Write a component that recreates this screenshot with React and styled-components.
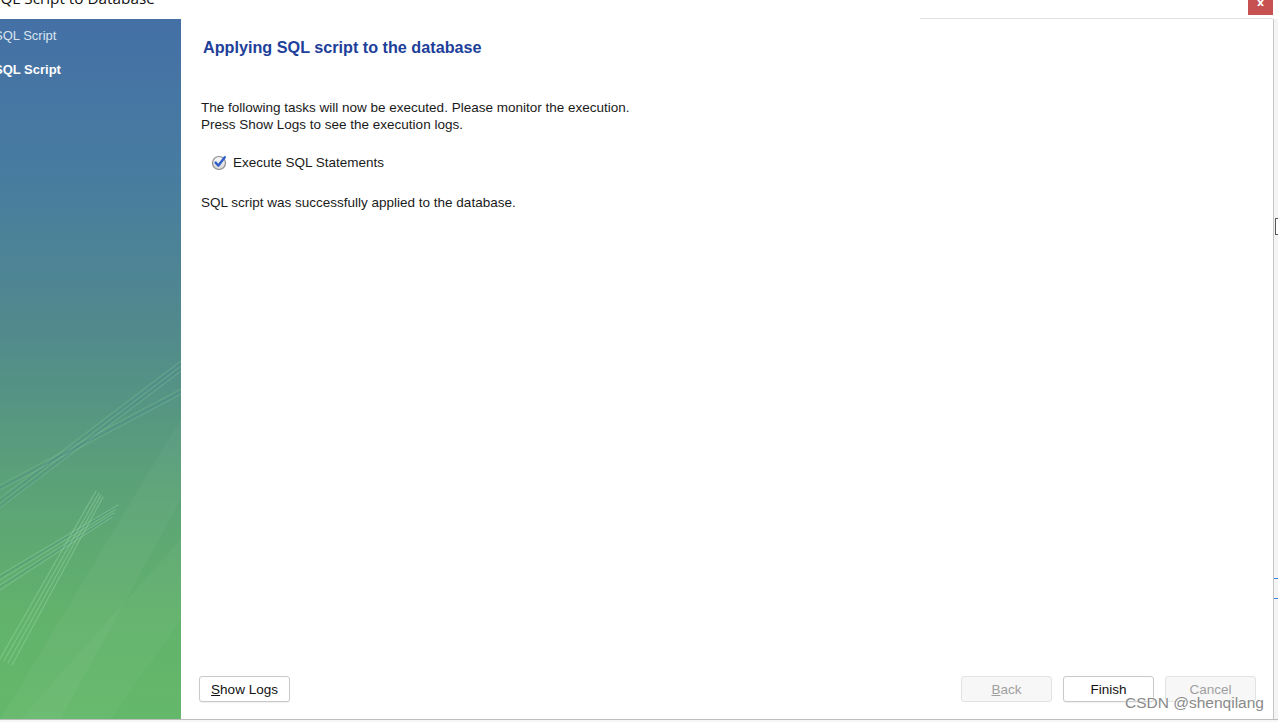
import React from 'react';
import styled, { createGlobalStyle } from 'styled-components';

const GlobalStyle = createGlobalStyle`
  html, body {
    margin: 0;
    padding: 0;
    background: #ffffff;
  }
  body {
    font-family: "Liberation Sans", Arial, sans-serif;
  }
`;

const Screen = styled.div`
  width: 1278px;
  height: 722px;
  overflow: hidden;
  display: flex;
  flex-direction: column;
  background: #ffffff;
`;

const TitleBar = styled.div`
  position: relative;
  height: 19px;
  flex: none;
  overflow: hidden;
  &::after {
    content: '';
    position: absolute;
    left: 920px;
    right: 5px;
    bottom: 0;
    height: 1px;
    background: #e1e1e1;
  }
`;

const TitleText = styled.div`
  margin: -12px 0 0 -8px;
  font-family: "Open Sans", "Liberation Sans", sans-serif;
  font-size: 15.3px;
  color: #111111;
  white-space: nowrap;
`;

const CloseButton = styled.div`
  position: absolute;
  top: 0;
  right: 5px;
  width: 25px;
  height: 15px;
  background: #c75050;
  color: #ffffff;
  font-family: "DejaVu Sans", sans-serif;
  font-size: 11px;
  font-weight: bold;
  line-height: 6px;
  text-align: center;
`;

const Body = styled.div`
  flex: 1;
  display: flex;
  min-height: 0;
`;

const Sidebar = styled.div`
  position: relative;
  width: 181px;
  flex: none;
  padding-top: 0;
  box-sizing: border-box;
  background: linear-gradient(
    180deg,
    #4470a6 0%,
    #487ca0 22%,
    #528a8c 45%,
    #5aa079 65%,
    #62b26c 85%,
    #64b86a 100%
  );
  overflow: hidden;
`;

const Streaks = styled.svg`
  position: absolute;
  left: 0;
  top: 0;
  width: 181px;
  height: 701px;
  pointer-events: none;
`;

const SideItem = styled.div`
  position: relative;
  text-indent: -6px;
  height: 34px;
  line-height: 34px;
  font-size: 13px;
  font-weight: ${(p) => (p.$active ? 'bold' : 'normal')};
  color: ${(p) => (p.$active ? '#ffffff' : '#d9e3ee')};
  white-space: nowrap;
`;

const Content = styled.div`
  flex: 1;
  display: flex;
  flex-direction: column;
  padding: 19px 17px 17px 20px;
  min-width: 0;
  font-size: 13.5px;
  color: #1a1a1a;
`;

const Heading = styled.h1`
  margin: 0 0 0 2px;
  font-size: 16.2px;
  font-weight: bold;
  color: #1d3f9a;
  line-height: 19px;
`;

const Paragraph = styled.p`
  margin: ${(p) => p.$top}px 0 0 0;
  line-height: 17px;
`;

const TaskRow = styled.div`
  display: flex;
  align-items: center;
  gap: 5px;
  margin: 21px 0 0 10px;
  line-height: 17px;
`;

const Footer = styled.div`
  margin-top: auto;
  display: flex;
  align-items: center;
`;

const Spacer = styled.div`
  flex: 1;
`;

const Button = styled.button`
  width: 91px;
  height: 26px;
  box-sizing: border-box;
  border: 1px solid ${(p) => (p.disabled ? '#e3e3e3' : '#c9c9c9')};
  border-radius: 3px;
  background: ${(p) => (p.disabled ? '#f7f7f7' : '#ffffff')};
  color: ${(p) => (p.disabled ? '#a0a0a0' : '#111111')};
  font-family: "Liberation Sans", Arial, sans-serif;
  font-size: 13.5px;
  padding: 0;
  margin-left: ${(p) => p.$gap || 0}px;
  box-shadow: ${(p) => (p.disabled ? 'none' : '0 1px 1px rgba(0,0,0,0.06)')};
  u {
    text-decoration: underline;
  }
`;

const RightEdge = styled.div`
  position: relative;
  width: 5px;
  flex: none;
  border-left: 1px solid #c6c6c6;
  background: #f4f4f4;
  box-sizing: border-box;
`;

const EdgeBox = styled.div`
  position: absolute;
  left: 1px;
  top: 199px;
  width: 6px;
  height: 15px;
  border: 1px solid #555555;
  background: #ffffff;
`;

const EdgeLine = styled.div`
  position: absolute;
  left: 0;
  right: 0;
  top: ${(p) => p.$top}px;
  height: 1px;
  background: #3b86d8;
`;

const BottomEdge = styled.div`
  height: 3px;
  flex: none;
  border-top: 1px solid #bdbdbd;
  background: #f6f6f6;
  box-sizing: border-box;
`;

const Watermark = styled.div`
  position: absolute;
  left: 1125px;
  top: 694px;
  font-family: "Liberation Sans", Arial, sans-serif;
  font-size: 15.5px;
  color: #8a8a8a;
  text-shadow: 0 0 2px #ffffff, 0 0 2px #ffffff;
  white-space: nowrap;
  pointer-events: none;
`;

const Frame = styled.div`
  position: relative;
`;

const CheckIcon = () => (
  <svg width="17" height="17" viewBox="0 0 17 17">
    <defs>
      <linearGradient id="cb" x1="0" y1="0" x2="0" y2="1">
        <stop offset="0" stopColor="#fbfbfb" />
        <stop offset="1" stopColor="#d6d6d6" />
      </linearGradient>
    </defs>
    <circle cx="8" cy="9" r="6.5" fill="url(#cb)" stroke="#8c8c8c" strokeWidth="1.2" />
    <path
      d="M4.6 8.6 L7.4 11.6 L13.8 3.2"
      fill="none"
      stroke="#2f5fc7"
      strokeWidth="2.4"
      strokeLinecap="round"
      strokeLinejoin="round"
    />
  </svg>
);

const SidebarArt = () => (
  <Streaks viewBox="0 0 181 701">
    <g fill="none" strokeLinecap="round">
      <polygon points="0,701 181,400 181,480 60,701" fill="rgba(255,255,255,0.035)" />
      <polygon points="20,701 181,520 181,600 110,701" fill="rgba(255,255,255,0.03)" />
      <g stroke="rgba(120,190,150,0.4)" strokeWidth="1.2">
        <path d="M0 479 L181 342" />
        <path d="M0 484 L181 347" />
        <path d="M0 489 L181 352" />
        <path d="M0 466 L181 370" />
        <path d="M0 471 L181 375" />
      </g>
      <g stroke="rgba(70,130,150,0.45)" strokeWidth="1">
        <path d="M0 482 L181 345" />
        <path d="M0 487 L181 350" />
        <path d="M0 469 L181 373" />
      </g>
      <g stroke="rgba(140,205,160,0.45)" strokeWidth="1.2">
        <path d="M0 556 L118 486" />
        <path d="M0 561 L116 490" />
        <path d="M0 566 L114 494" />
        <path d="M0 571 L112 498" />
      </g>
      <g stroke="rgba(70,140,140,0.4)" strokeWidth="1">
        <path d="M0 558 L117 488" />
        <path d="M0 568 L113 496" />
      </g>
      <g stroke="rgba(150,215,165,0.45)" strokeWidth="1.2">
        <path d="M0 640 L96 472" />
        <path d="M4 642 L99 474" />
        <path d="M8 644 L101 476" />
        <path d="M12 646 L103 478" />
      </g>
    </g>
  </Streaks>
);

export default function App() {
  return (
    <>
      <GlobalStyle />
      <Frame>
        <Screen>
          <TitleBar>
            <TitleText>SQL Script to Database</TitleText>
            <CloseButton>x</CloseButton>
          </TitleBar>
          <Body>
            <Sidebar>
              <SidebarArt />
              <SideItem>SQL Script</SideItem>
              <SideItem $active>SQL Script</SideItem>
            </Sidebar>
            <Content>
              <Heading>Applying SQL script to the database</Heading>
              <Paragraph $top={42}>
                The following tasks will now be executed. Please monitor the execution.
                <br />
                Press Show Logs to see the execution logs.
              </Paragraph>
              <TaskRow>
                <CheckIcon />
                <span>Execute SQL Statements</span>
              </TaskRow>
              <Paragraph $top={23}>SQL script was successfully applied to the database.</Paragraph>
              <Footer>
                <Button type="button" style={{ marginLeft: -2 }}>
                  <u>S</u>how Logs
                </Button>
                <Spacer />
                <Button type="button" disabled>
                  <u>B</u>ack
                </Button>
                <Button type="button" $gap={11}>
                  Finish
                </Button>
                <Button type="button" disabled $gap={11}>
                  Cancel
                </Button>
              </Footer>
            </Content>
            <RightEdge>
              <EdgeBox />
              <EdgeLine $top={559} />
              <EdgeLine $top={579} />
            </RightEdge>
          </Body>
          <BottomEdge />
        </Screen>
        <Watermark>CSDN @shenqilang</Watermark>
      </Frame>
    </>
  );
}
